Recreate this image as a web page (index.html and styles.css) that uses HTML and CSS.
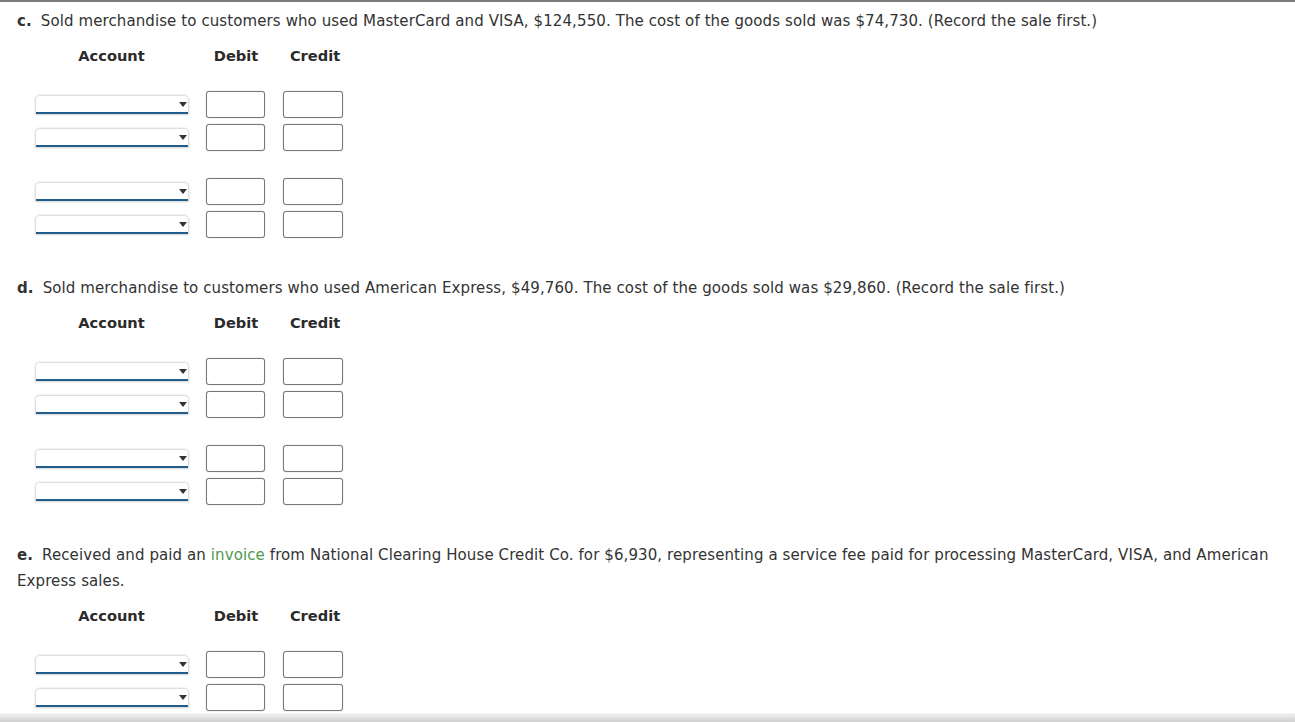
FILE: index.html
```html
<!DOCTYPE html>
<html>
<head>
<meta charset="utf-8">
<link rel="stylesheet" href="styles.css">
</head>
<body>
<div class="page">
  <section class="part">
    <p class="prompt"><b class="label">c.</b><span>Sold merchandise to customers who used MasterCard and VISA, $124,550. The cost of the goods sold was $74,730. (Record the sale first.)</span></p>
    <div class="head"><span class="h-acc">Account</span><span class="h-num">Debit</span><span class="h-num">Credit</span></div>
    <div class="group">
      <div class="row"><span class="sel"></span><span class="inp"></span><span class="inp"></span></div>
      <div class="row"><span class="sel"></span><span class="inp"></span><span class="inp"></span></div>
    </div>
    <div class="group">
      <div class="row"><span class="sel"></span><span class="inp"></span><span class="inp"></span></div>
      <div class="row"><span class="sel"></span><span class="inp"></span><span class="inp"></span></div>
    </div>
  </section>
  <section class="part">
    <p class="prompt"><b class="label">d.</b><span>Sold merchandise to customers who used American Express, $49,760. The cost of the goods sold was $29,860. (Record the sale first.)</span></p>
    <div class="head"><span class="h-acc">Account</span><span class="h-num">Debit</span><span class="h-num">Credit</span></div>
    <div class="group">
      <div class="row"><span class="sel"></span><span class="inp"></span><span class="inp"></span></div>
      <div class="row"><span class="sel"></span><span class="inp"></span><span class="inp"></span></div>
    </div>
    <div class="group">
      <div class="row"><span class="sel"></span><span class="inp"></span><span class="inp"></span></div>
      <div class="row"><span class="sel"></span><span class="inp"></span><span class="inp"></span></div>
    </div>
  </section>
  <section class="part">
    <p class="prompt"><b class="label">e.</b><span>Received and paid an <span class="term">invoice</span> from National Clearing House Credit Co. for $6,930, representing a service fee paid for processing MasterCard, VISA, and American Express sales.</span></p>
    <div class="head"><span class="h-acc">Account</span><span class="h-num">Debit</span><span class="h-num">Credit</span></div>
    <div class="group">
      <div class="row"><span class="sel"></span><span class="inp"></span><span class="inp"></span></div>
      <div class="row"><span class="sel"></span><span class="inp"></span><span class="inp"></span></div>
    </div>
  </section>
</div>
<div class="shade"></div>
</body>
</html>
```

FILE: styles.css
```css
html, body {
  margin: 0;
  padding: 0;
  background: #fff;
}
body {
  border-top: 2px solid #7a7a7a;
  font-family: "DejaVu Sans", Verdana, sans-serif;
  font-size: 15px;
  letter-spacing: 0.1px;
  color: #333;
  overflow: hidden;
  height: 720px;
}
.page {
  padding: 6px 0 0 17px;
  width: 1260px;
}
.part {
  margin-bottom: 37px;
}
.prompt {
  margin: 0;
  line-height: 26px;
}
.label {
  margin-right: 9px;
}
.term {
  color: #4e9a4e;
}
.head {
  display: grid;
  grid-template-columns: 151px 60px 60px;
  column-gap: 19px;
  padding-left: 19px;
  margin-top: 9px;
  line-height: 26px;
  font-family: "DejaVu Sans", Verdana, sans-serif;
  font-weight: 700;
  font-size: 14.6px;
  letter-spacing: 0;
  color: #2b2b2b;
}
.h-acc, .h-num {
  text-align: center;
  white-space: nowrap;
}
.group {
  display: flex;
  flex-direction: column;
  gap: 6px;
  margin-top: 22px;
}
.group + .group {
  margin-top: 27px;
}
.row {
  display: grid;
  grid-template-columns: 151px 60px 60px;
  column-gap: 18px;
  align-items: center;
  padding-left: 19px;
  height: 27px;
}
.sel {
  position: relative;
  display: block;
  height: 16px;
  margin-top: 1px;
  margin-right: -1px;
  background: #fff;
  border-radius: 4px 4px 0 0;
  box-shadow: 0 0 2px 1px #d2d2d2;
  border-bottom: 2px solid #1f5e8c;
}
.sel::after {
  content: "";
  position: absolute;
  right: 1px;
  top: 6px;
  border-left: 4px solid transparent;
  border-right: 4px solid transparent;
  border-top: 5px solid #333;
}
.inp {
  display: block;
  height: 25px;
  border: 1px solid #777;
  border-radius: 3px;
  box-shadow: 0 0 1px #999;
  background: #fff;
}
.row .inp:nth-child(2) {
  margin-left: 1px;
}
.shade {
  position: fixed;
  left: 0;
  right: 0;
  bottom: 0;
  height: 9px;
  background: linear-gradient(to bottom, rgba(200,200,200,0.2), #cfcfcf);
}
```
